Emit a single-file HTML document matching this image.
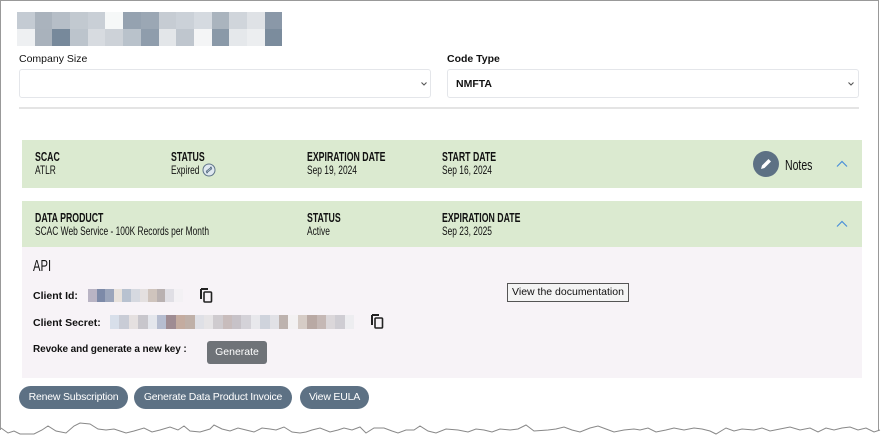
<!DOCTYPE html>
<html><head><meta charset="utf-8"><style>
*{margin:0;padding:0;box-sizing:border-box}
body{width:881px;height:442px;background:#fff;position:relative;overflow:hidden;font-family:"Liberation Sans",sans-serif;color:#111}
.a{position:absolute}
.n{transform:scaleX(.7);transform-origin:0 0;white-space:nowrap}
.h{font-weight:bold;font-size:12.5px}
.v{font-size:12px}
.lbl{font-size:10.5px}
.sel{border:1px solid #e4e6ea;border-radius:3px;background:#fff}
.btn{background:#5d7184;color:#fff;border-radius:12px;font-size:10.5px;letter-spacing:-.2px;text-align:center;line-height:23px;height:23px;white-space:nowrap}
.g{background:#dbead0}
</style></head><body>
<div class="a" style="left:0;top:0;width:879px;height:430px;border:1px solid #999;border-bottom:none"></div>
<div class="a" style="left:17px;top:12px;display:grid;grid-template-columns:repeat(15,17.7px);grid-template-rows:17px 17px">
<div style="background:#c4cbd3"></div><div style="background:#aab3bd"></div><div style="background:#b6bec7"></div><div style="background:#c2c9d0"></div><div style="background:#c9cfd6"></div><div style="background:#f6f8f8"></div><div style="background:#95a2b0"></div><div style="background:#9ba7b4"></div><div style="background:#c6ccd3"></div><div style="background:#cbd1d8"></div><div style="background:#d5dae0"></div><div style="background:#aab4be"></div><div style="background:#d0d5db"></div><div style="background:#dfe2e6"></div><div style="background:#8a98a8"></div>
<div style="background:#eef0f2"></div><div style="background:#a9b2bc"></div><div style="background:#77899b"></div><div style="background:#bcc4cc"></div><div style="background:#d7dbe0"></div><div style="background:#cdd2d8"></div><div style="background:#b9c2cb"></div><div style="background:#8f9dac"></div><div style="background:#e3e6e9"></div><div style="background:#bfc6ce"></div><div style="background:#f4f5f6"></div><div style="background:#8a99a8"></div><div style="background:#e5e8eb"></div><div style="background:#eceef0"></div><div style="background:#7b8c9d"></div>
</div>
<div class="a lbl" style="left:19px;top:53px">Company Size</div>
<div class="a sel" style="left:19px;top:69px;width:412px;height:29px"></div>
<svg class="a" style="left:420px;top:81px" width="8" height="6"><path d="M1.5 1.5L4 4L6.5 1.5" stroke="#555" stroke-width="1.1" fill="none"/></svg>
<div class="a lbl" style="left:447px;top:53px;font-weight:bold">Code Type</div>
<div class="a sel" style="left:447px;top:69px;width:412px;height:29px"></div>
<div class="a" style="left:456px;top:78px;font-size:10.5px;font-weight:bold">NMFTA</div>
<svg class="a" style="left:847px;top:81px" width="8" height="6"><path d="M1.5 1.5L4 4L6.5 1.5" stroke="#555" stroke-width="1.1" fill="none"/></svg>
<div class="a" style="left:19px;top:107px;width:840px;height:2px;background:#e4e4e4"></div>

<div class="a g" style="left:22px;top:140px;width:840px;height:48px"></div>
<div class="a n h" style="left:35px;top:150px">SCAC</div>
<div class="a n v" style="left:35px;top:163px">ATLR</div>
<div class="a n h" style="left:171px;top:150px">STATUS</div>
<div class="a n v" style="left:171px;top:163px">Expired</div>
<svg class="a" style="left:202px;top:163px" width="14" height="14"><circle cx="7" cy="7" r="6" fill="#dfe8f0" stroke="#5f7488" stroke-width="1"/><path d="M4 8.5L9 4.5M8 4.3h1.3v1.3M10 5.5L5 9.5M6 9.7H4.7V8.4" stroke="#5f7488" stroke-width="1" fill="none"/></svg>
<div class="a n h" style="left:307px;top:150px">EXPIRATION DATE</div>
<div class="a n v" style="left:307px;top:163px">Sep 19, 2024</div>
<div class="a n h" style="left:442px;top:150px">START DATE</div>
<div class="a n v" style="left:442px;top:163px">Sep 16, 2024</div>
<svg class="a" style="left:753px;top:151px" width="26" height="26"><circle cx="13" cy="13" r="13" fill="#5d7184"/><path d="M8 18l1-3.5 6.5-6.5 2.5 2.5-6.5 6.5z" fill="#fff"/></svg>
<div class="a n" style="left:785px;top:157px;font-size:15px">Notes</div>
<svg class="a" style="left:836px;top:160px" width="12" height="8"><path d="M1 6.5L6 1.5L11 6.5" stroke="#4a90d9" stroke-width="1.2" fill="none"/></svg>

<div class="a g" style="left:22px;top:201px;width:840px;height:46px"></div>
<div class="a n h" style="left:35px;top:211px">DATA PRODUCT</div>
<div class="a n v" style="left:35px;top:224px">SCAC Web Service - 100K Records per Month</div>
<div class="a n h" style="left:307px;top:211px">STATUS</div>
<div class="a n v" style="left:307px;top:224px">Active</div>
<div class="a n h" style="left:442px;top:211px">EXPIRATION DATE</div>
<div class="a n v" style="left:442px;top:224px">Sep 23, 2025</div>
<svg class="a" style="left:836px;top:220px" width="12" height="8"><path d="M1 6.5L6 1.5L11 6.5" stroke="#4a90d9" stroke-width="1.2" fill="none"/></svg>

<div class="a" style="left:22px;top:247px;width:840px;height:131px;background:#f7f3f7"></div>
<div class="a n" style="left:33px;top:258px;font-size:16px">API</div>
<div class="a" style="left:33px;top:290px;font-size:10.5px;font-weight:bold">Client Id:</div>
<div class="a" style="left:88px;top:289px;display:flex;height:13px">
<div style="width:8.6px;background:#b9b4c4"></div><div style="width:8.6px;background:#7d8aa8"></div><div style="width:8.6px;background:#9ba5bb"></div><div style="width:8.6px;background:#e8e2dc"></div><div style="width:8.6px;background:#b8c2d0"></div><div style="width:8.6px;background:#d6d9e0"></div><div style="width:8.6px;background:#e4e0e0"></div><div style="width:8.6px;background:#cfc4bd"></div><div style="width:8.6px;background:#b9b1b1"></div><div style="width:8.6px;background:#e0dfe5"></div><div style="width:8.6px;background:#f3f1f4"></div></div>
<svg class="a" style="left:199px;top:288px" width="14" height="16"><path d="M2 1v10" stroke="#222" stroke-width="2"/><path d="M2 1h7" stroke="#222" stroke-width="2"/><rect x="5" y="4" width="7.5" height="10" fill="none" stroke="#222" stroke-width="1.6" rx="1"/></svg>
<div class="a" style="left:33px;top:317px;font-size:10.5px;font-weight:bold">Client Secret:</div>
<div class="a" style="left:110px;top:315px;display:flex;height:14px">
<div style="width:9.4px;background:#d8dfea"></div><div style="width:9.4px;background:#c9ccd6"></div><div style="width:9.4px;background:#e5e0e0"></div><div style="width:9.4px;background:#c8c6cc"></div><div style="width:9.4px;background:#e4e6ec"></div><div style="width:9.4px;background:#b6bdd0"></div><div style="width:9.4px;background:#9f8c93"></div><div style="width:9.4px;background:#c4aca0"></div><div style="width:9.4px;background:#bfb0a8"></div><div style="width:9.4px;background:#dfe0e6"></div><div style="width:9.4px;background:#e6e4e6"></div><div style="width:9.4px;background:#cfcbcf"></div><div style="width:9.4px;background:#c8bcbc"></div><div style="width:9.4px;background:#c7c2c8"></div><div style="width:9.4px;background:#d4d2d8"></div><div style="width:9.4px;background:#e8e8ec"></div><div style="width:9.4px;background:#cfd3dc"></div><div style="width:9.4px;background:#e1e1e6"></div><div style="width:9.4px;background:#bdb2ae"></div><div style="width:9.4px;background:#f3f1f2"></div><div style="width:9.4px;background:#d6ccc6"></div><div style="width:9.4px;background:#b9a9a4"></div><div style="width:9.4px;background:#c5b8b5"></div><div style="width:9.4px;background:#dbd7da"></div><div style="width:9.4px;background:#cfcdd3"></div><div style="width:9.4px;background:#ededf0"></div></div>
<svg class="a" style="left:370px;top:314px" width="14" height="16"><path d="M2 1v10" stroke="#222" stroke-width="2"/><path d="M2 1h7" stroke="#222" stroke-width="2"/><rect x="5" y="4" width="7.5" height="10" fill="none" stroke="#222" stroke-width="1.6" rx="1"/></svg>
<div class="a" style="left:33px;top:344px;font-size:10px;font-weight:bold;letter-spacing:-.1px">Revoke and generate a new key :</div>
<div class="a" style="left:207px;top:341px;width:60px;height:23px;background:#6f7378;color:#fff;border-radius:3px;font-size:10.5px;text-align:center;line-height:23px">Generate</div>
<div class="a" style="left:507px;top:283px;width:122px;height:19px;border:1px solid #555;background:#f4f4f4;font-size:10.5px;line-height:17px;text-align:center;color:#111">View the documentation</div>

<div class="a btn" style="left:19px;top:386px;width:109px">Renew Subscription</div>
<div class="a btn" style="left:134px;top:386px;width:158px">Generate Data Product Invoice</div>
<div class="a btn" style="left:300px;top:386px;width:69px">View EULA</div>

<svg class="a" style="left:0;top:420px" width="881" height="22"><polyline fill="none" stroke="#888" stroke-width="1" points="1,8 8,13 14,11 20,14 34,14 42,10 48,6 56,11 66,13 74,6 80,3 90,4 98,9 106,10 114,9 120,11 126,13 134,11 144,8 152,12 160,10 170,7 178,10 184,6 190,11 200,12 210,9 214,5 222,9 230,11 238,8 246,10 254,12 262,8 270,9 276,10 284,7 292,12 300,13 306,12 312,10 320,8 330,12 338,10 344,8 352,10 360,7 366,13 374,8 384,8 392,11 398,13 406,10 414,10 420,6 428,11 436,13 446,9 458,10 468,12 476,9 484,10 492,12 500,9 510,10 518,9 526,5 534,11 548,10 556,9 564,7 572,10 580,12 590,8 598,6 606,9 614,12 624,10 634,9 640,10 648,8 656,12 666,10 674,8 684,10 694,8 702,9 710,11 716,14 726,8 734,11 742,9 754,10 762,8 770,11 780,9 790,7 800,10 810,8 818,12 826,8 834,10 842,8 850,7 858,10 866,8 874,12 880,10"/></svg>
</body></html>
